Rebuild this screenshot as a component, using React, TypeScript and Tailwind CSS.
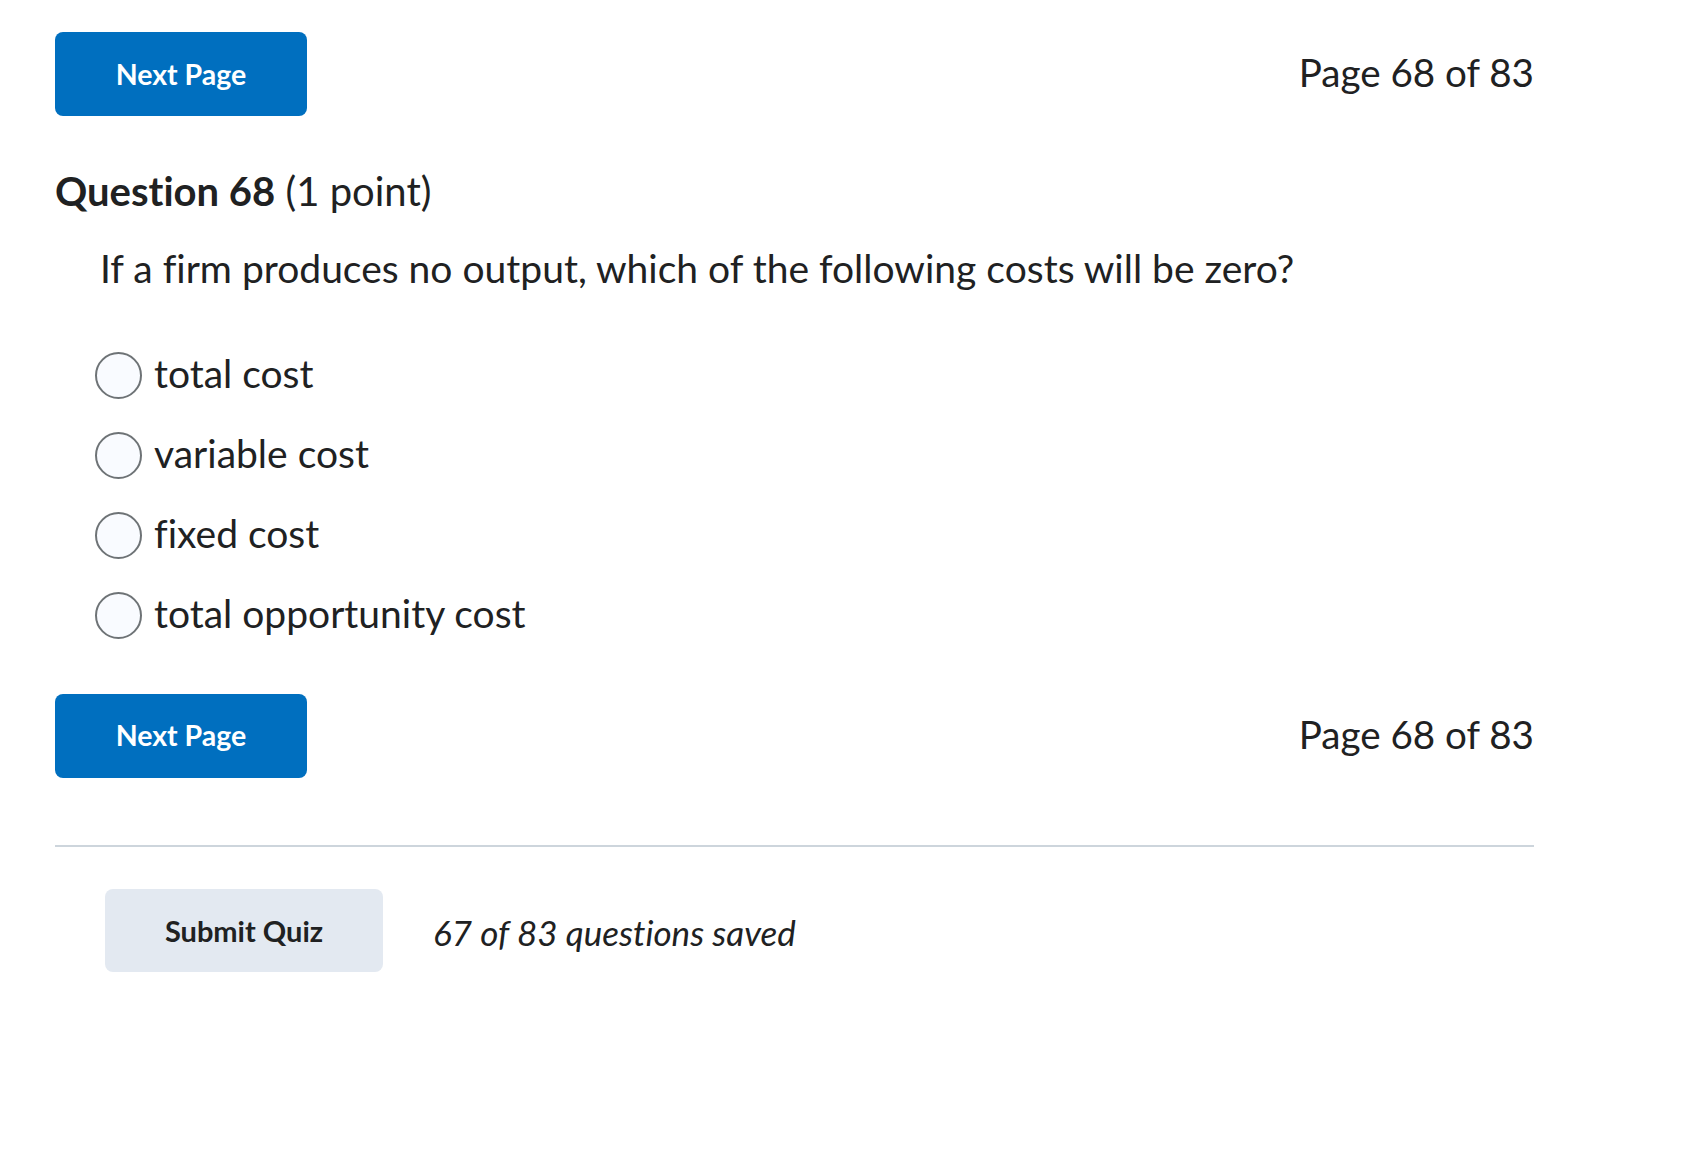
import React from "react";

const options = ["total cost", "variable cost", "fixed cost", "total opportunity cost"];

function NavRow() {
  return (
    <div className="flex items-center justify-between">
      <button className="flex h-[84px] w-[252px] items-center justify-center rounded-[8px] bg-[#006fbf] text-[28.5px] font-bold text-white">
        Next Page
      </button>
      <span className="pb-[3px] text-[38.6px] leading-[1.2] text-[#202122]">Page 68 of 83</span>
    </div>
  );
}

export default function App() {
  return (
    <div className="min-h-[1172px] bg-white font-['Lato',sans-serif] text-[#202122] [font-variant-ligatures:none]">
      <div className="w-[1479px] pl-[55px] pt-[32px] box-content">
        <NavRow />
        <h2 className="mt-[51px] text-[40px] leading-[1.2]">
          <span className="font-bold">Question 68</span> <span className="font-normal">(1 point)</span>
        </h2>
        <p className="mt-[30px] pl-[45px] text-[39px] leading-[1.2]">
          If a firm produces no output, which of the following costs will be zero?
        </p>
        <div className="mt-[44px] flex flex-col">
          {options.map((o) => (
            <label key={o} className="flex h-[80px] items-center pl-[40px]">
              <span className="h-[47px] w-[47px] shrink-0 rounded-full border-2 border-[#6e7376] bg-[#f9fbff]" />
              <span className="ml-[12px] pb-[5px] text-[39px] leading-[1.2]">{o}</span>
            </label>
          ))}
        </div>
        <div className="mt-[38px]">
          <NavRow />
        </div>
        <div className="mt-[67px] h-[2px] bg-[#cdd5dc]" />
        <div className="mt-[42px] flex items-center pl-[50px]">
          <button className="flex h-[83px] w-[278px] items-center justify-center rounded-[8px] bg-[#e3e9f1] text-[29px] font-bold text-[#202122]">
            Submit Quiz
          </button>
          <span className="ml-[50px] pt-[4px] text-[35px] italic text-[#202122]">67 of 83 questions saved</span>
        </div>
      </div>
    </div>
  );
}
